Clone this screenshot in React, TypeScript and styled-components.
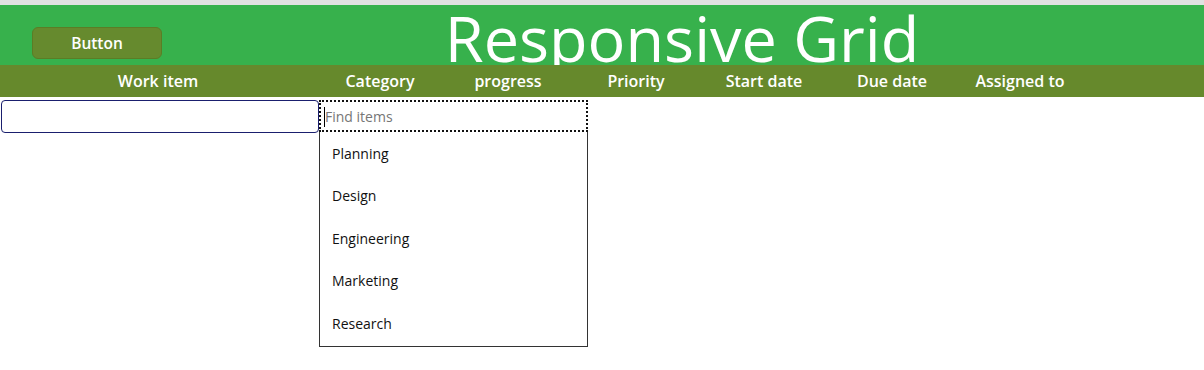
import React from 'react';
import styled, { createGlobalStyle } from 'styled-components';

const columns = [
    { label: 'Work item', width: 316 },
    { label: 'Category', width: 128 },
    { label: 'progress', width: 128 },
    { label: 'Priority', width: 128 },
    { label: 'Start date', width: 128 },
    { label: 'Due date', width: 128 },
    { label: 'Assigned to', width: 128 },
];

const categories = ['Planning', 'Design', 'Engineering', 'Marketing', 'Research'];

const App: React.FC = () => (
    <>
        <GlobalStyle />
        <Page>
            <TopStrip />
            <Header>
                <ButtonArea>
                    <HeaderButton>Button</HeaderButton>
                </ButtonArea>
                <Title>Responsive Grid</Title>
            </Header>
            <ColumnBar>
                {columns.map((c) => (
                    <ColumnLabel key={c.label} width={c.width}>{c.label}</ColumnLabel>
                ))}
            </ColumnBar>
            <InputRow>
                <TextBox />
                <Combo>
                    <SearchBox>
                        <Caret />
                        <Placeholder>Find items</Placeholder>
                    </SearchBox>
                    <OptionList>
                        {categories.map((c) => (
                            <OptionItem key={c}>{c}</OptionItem>
                        ))}
                    </OptionList>
                </Combo>
            </InputRow>
        </Page>
    </>
);

export default App;

const GlobalStyle = createGlobalStyle`
    html, body {
        margin: 0;
        padding: 0;
        background: #ffffff;
        font-family: "Open Sans", "Noto Sans", sans-serif;
    }
`;

const Page = styled.div`
    width: 1204px;
    height: 370px;
    overflow: hidden;
`;

const TopStrip = styled.div`
    height: 5px;
    background: #e1e1e1;
`;

const Header = styled.div`
    height: 60px;
    background: #37b14c;
    display: flex;
    overflow: hidden;
`;

const ButtonArea = styled.div`
    width: 160px;
    padding: 22px 0 0 32px;
    box-sizing: border-box;
`;

const HeaderButton = styled.button`
    width: 130px;
    height: 32px;
    border: 1px solid #5b7d25;
    border-radius: 6px;
    background: #668a2e;
    color: #ffffff;
    font-family: "Open Sans", sans-serif;
    font-weight: 600;
    font-size: 15.5px;
    cursor: pointer;
`;

const Title = styled.h1`
    flex: 1;
    margin: -2px 0 0 0;
    text-align: center;
    color: #ffffff;
    font-weight: 400;
    font-size: 63px;
    line-height: 70px;
    white-space: nowrap;
`;

const ColumnBar = styled.div`
    height: 32px;
    background: #66892c;
    display: flex;
    align-items: center;
`;

const ColumnLabel = styled.div<{ width: number }>`
    width: ${({ width }) => width}px;
    flex: none;
    text-align: center;
    color: #ffffff;
    font-weight: 600;
    font-size: 16px;
`;

const InputRow = styled.div`
    display: flex;
    align-items: flex-start;
    padding: 3px 0 0 1px;
`;

const TextBox = styled.div`
    width: 318px;
    height: 33px;
    box-sizing: border-box;
    border: 1px solid #1a1f6e;
    border-radius: 4px;
    background: #ffffff;
`;

const Combo = styled.div`
    width: 269px;
    display: flex;
    flex-direction: column;
`;

const SearchBox = styled.div`
    height: 32px;
    box-sizing: border-box;
    border: 2px dotted #111111;
    display: flex;
    align-items: center;
    padding: 1px 0 0 3px;
`;

const Caret = styled.span`
    width: 1px;
    height: 20px;
    background: #000000;
`;

const Placeholder = styled.span`
    color: #767676;
    font-size: 14px;
`;

const OptionList = styled.div`
    border: 1px solid #333333;
    border-top: none;
    padding: 0 0 1px 0;
`;

const OptionItem = styled.div`
    height: 42.5px;
    display: flex;
    align-items: center;
    padding-left: 12px;
    font-size: 14px;
    color: #111111;
`;
